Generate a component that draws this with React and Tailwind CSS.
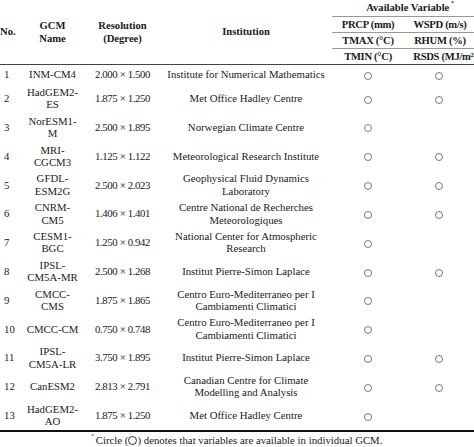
import React from "react";

const rows = [
  ["1", ["INM-CM4"], "2.000 × 1.500", ["Institute for Numerical Mathematics"], true, true],
  ["2", ["HadGEM2-", "ES"], "1.875 × 1.250", ["Met Office Hadley Centre"], true, true],
  ["3", ["NorESM1-", "M"], "2.500 × 1.895", ["Norwegian Climate Centre"], true, false],
  ["4", ["MRI-", "CGCM3"], "1.125 × 1.122", ["Meteorological Research Institute"], true, true],
  ["5", ["GFDL-", "ESM2G"], "2.500 × 2.023", ["Geophysical Fluid Dynamics", "Laboratory"], true, true],
  ["6", ["CNRM-", "CM5"], "1.406 × 1.401", ["Centre National de Recherches", "Meteorologiques"], true, true],
  ["7", ["CESM1-", "BGC"], "1.250 × 0.942", ["National Center for Atmospheric", "Research"], true, false],
  ["8", ["IPSL-", "CM5A-MR"], "2.500 × 1.268", ["Institut Pierre-Simon Laplace"], true, true],
  ["9", ["CMCC-", "CMS"], "1.875 × 1.865", ["Centro Euro-Mediterraneo per I", "Cambiamenti Climatici"], true, false],
  ["10", ["CMCC-CM"], "0.750 × 0.748", ["Centro Euro-Mediterraneo per I", "Cambiamenti Climatici"], true, false],
  ["11", ["IPSL-", "CM5A-LR"], "3.750 × 1.895", ["Institut Pierre-Simon Laplace"], true, true],
  ["12", ["CanESM2"], "2.813 × 2.791", ["Canadian Centre for Climate", "Modelling and Analysis"], true, true],
  ["13", ["HadGEM2-", "AO"], "1.875 × 1.250", ["Met Office Hadley Centre"], true, false],
];

function Circle() {
  return <span className="inline-block w-[8px] h-[8px] rounded-full border border-[#777] align-middle" />;
}

function Lines({ items }) {
  return items.map((t, i) => (
    <React.Fragment key={i}>
      {i > 0 && <br />}
      {t}
    </React.Fragment>
  ));
}

export default function App() {
  return (
    <div
      className="w-[474px] h-[447px] overflow-hidden bg-white text-[#1a1a1a]"
      style={{ fontFamily: '"Liberation Serif", "Times New Roman", serif' }}
    >
      <table className="w-[484px] table-fixed border-collapse text-center">
        <colgroup>
          <col className="w-[20px]" />
          <col className="w-[65px]" />
          <col className="w-[75px]" />
          <col className="w-[172px]" />
          <col className="w-[72px]" />
          <col className="w-[80px]" />
        </colgroup>
        <thead className="font-bold text-[10.6px]">
          <tr className="h-[16px]">
            <th rowSpan={4} className="border-b border-[#444] leading-[13px] align-middle text-left pl-0">No.</th>
            <th rowSpan={4} className="border-b border-[#444] leading-[13px] align-middle">GCM<br />Name</th>
            <th rowSpan={4} className="border-b border-[#444] leading-[13px] align-middle">Resolution<br />(Degree)</th>
            <th rowSpan={4} className="border-b border-[#444] leading-[13px] align-middle">Institution</th>
            <th colSpan={2} className="border-b border-[#999] leading-[14px] p-0 pl-[4px] align-middle">
              Available Variable<sup className="text-[5px] align-top relative top-[1px] ml-[2px]">a</sup>
            </th>
          </tr>
          <tr className="h-[16px]">
            <th className="border-b border-[#999] p-0 leading-[15px] tracking-[-0.3px]">PRCP (mm)</th>
            <th className="border-b border-[#999] p-0 leading-[15px] tracking-[-0.3px] pr-[8px]">WSPD (m/s)</th>
          </tr>
          <tr className="h-[16px]">
            <th className="border-b border-[#999] p-0 leading-[15px] tracking-[-0.3px]">TMAX (°C)</th>
            <th className="border-b border-[#999] p-0 leading-[15px] tracking-[-0.3px] pr-[8px]">RHUM (%)</th>
          </tr>
          <tr className="h-[16px]">
            <th className="border-b border-[#444] p-0 leading-[15px] tracking-[-0.3px]">TMIN (°C)</th>
            <th className="border-b border-[#444] p-0 leading-[15px] tracking-[-0.3px] pl-[2px] whitespace-nowrap">RSDS (MJ/m²)</th>
          </tr>
        </thead>
        <tbody className="font-normal text-[10.8px]">
          {rows.map((r, idx) => {
            const last = idx === rows.length - 1;
            const pad = idx === 0 ? "py-[3.5px]" : "py-[2px]";
            const b = last ? "border-b-[2px] border-[#111]" : "";
            return (
              <tr key={r[0]}>
                <td className={`${pad} ${b} leading-[12.4px] align-middle text-left pl-[4px] whitespace-nowrap`}>{r[0]}</td>
                <td className={`${pad} ${b} leading-[12.4px] align-middle whitespace-nowrap`}><Lines items={r[1]} /></td>
                <td className={`${pad} ${b} leading-[12.4px] align-middle whitespace-nowrap tracking-[-0.4px]`}>{r[2]}</td>
                <td className={`${pad} ${b} leading-[12.4px] align-middle whitespace-nowrap`}><Lines items={r[3]} /></td>
                <td className={`${pad} ${b} leading-[12.4px] align-middle`}>{r[4] && <Circle />}</td>
                <td className={`${pad} ${b} leading-[12.4px] align-middle pr-[10px]`}>{r[5] && <Circle />}</td>
              </tr>
            );
          })}
        </tbody>
      </table>
      <div className="mt-[2px] text-center text-[10.8px] leading-[13px] w-[474px]">
        <sup className="text-[5px] align-top relative top-[1px] mr-[2px]">a</sup>Circle (<span className="inline-block w-[9px] h-[9px] rounded-full border border-[#333] align-middle relative -top-[1px]" />) denotes that variables are available in individual GCM.
      </div>
    </div>
  );
}
